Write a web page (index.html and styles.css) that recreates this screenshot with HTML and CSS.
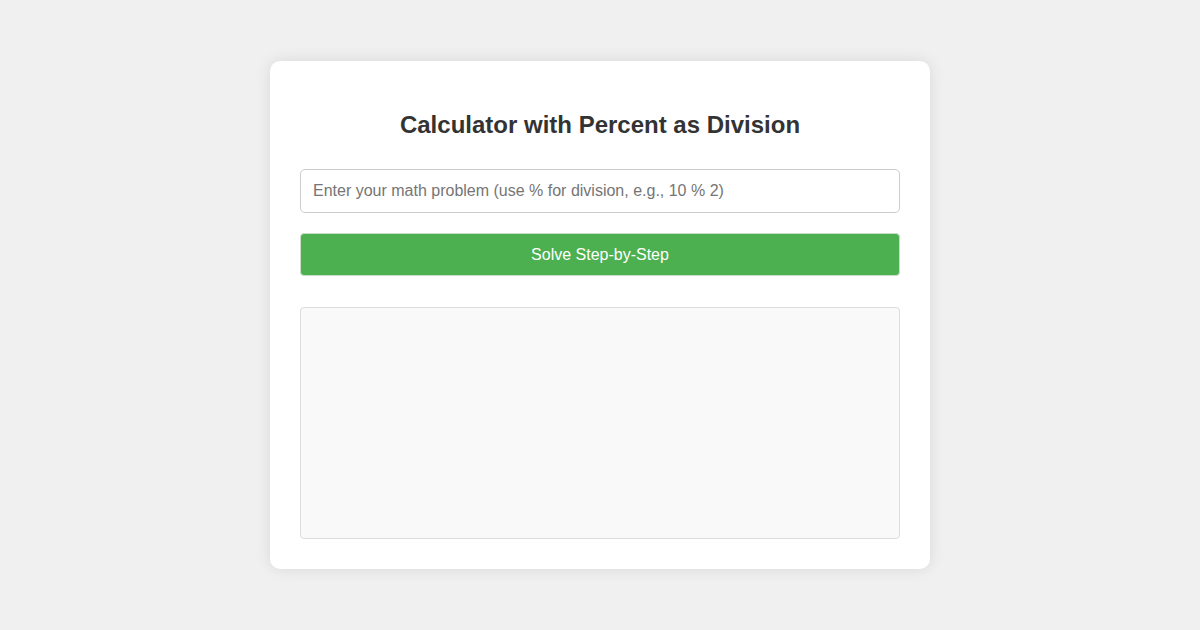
FILE: index.html
```html
<!DOCTYPE html>
<html lang="en">
<head>
<meta charset="utf-8">
<title>Calculator with Percent as Division</title>
<link rel="stylesheet" href="styles.css">
</head>
<body>
<div class="container">
  <h2 class="title">Calculator with Percent as Division</h2>
  <input class="problem" type="text" placeholder="Enter your math problem (use % for division, e.g., 10 % 2)">
  <button class="solve">Solve Step-by-Step</button>
  <div class="result"></div>
</div>
</body>
</html>
```
FILE: styles.css
```css
* { box-sizing: border-box; }
html, body { height: 100%; }
body {
  margin: 0;
  background: #f0f0f0;
  font-family: "Liberation Sans", Arial, sans-serif;
  display: flex;
  align-items: center;
  justify-content: center;
}
.container {
  width: 660px;
  background: #fff;
  padding: 30px;
  border-radius: 10px;
  box-shadow: 0 0 15px rgba(0,0,0,0.1);
}
.title {
  margin: 20px 0 30px;
  text-align: center;
  font-size: 24px;
  line-height: 28px;
  color: #333;
}
.problem {
  display: block;
  width: 100%;
  height: 44px;
  padding: 12px;
  font-family: inherit;
  font-size: 16px;
  border: 1px solid #ccc;
  border-radius: 5px;
  color: #333;
}
.problem::placeholder { color: #757575; }
.solve {
  display: block;
  width: 100%;
  height: 43px;
  margin-top: 20px;
  background: #4caf50;
  color: #fff;
  font-family: inherit;
  font-size: 16px;
  border: 1px solid #c8dcc8;
  border-radius: 4px;
}
.result {
  margin-top: 31px;
  height: 232px;
  background: #f9f9f9;
  border: 1px solid #ddd;
  border-radius: 4px;
}
```
